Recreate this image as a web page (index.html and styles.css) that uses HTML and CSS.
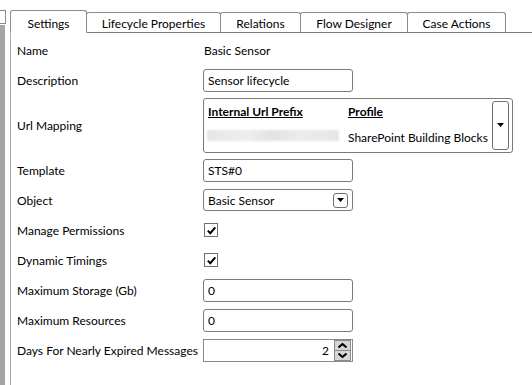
FILE: index.html
```html
<!DOCTYPE html>
<html>
<head>
<meta charset="utf-8">
<link rel="stylesheet" href="styles.css">
</head>
<body>
<div class="app">
  <div class="scroll">
    <div class="scroll-btn"></div>
    <div class="scroll-track"></div>
  </div>
  <div class="tabctl">
    <div class="tabstrip">
      <div class="tab sel w1">Settings</div>
      <div class="tab w2">Lifecycle Properties</div>
      <div class="tab w3">Relations</div>
      <div class="tab w4">Flow Designer</div>
      <div class="tab w5">Case Actions</div>
      <div class="tab-rest"></div>
    </div>
    <div class="panel">
      <div class="row"><div class="lbl">Name</div><div class="val"><span class="plain">Basic Sensor</span></div></div>
      <div class="row"><div class="lbl">Description</div><div class="val"><div class="tb">Sensor lifecycle</div></div></div>
      <div class="row tall"><div class="lbl">Url Mapping</div><div class="val">
        <div class="grid-box">
          <div class="grid-cols">
            <div class="gcol c1">
              <div class="gh">Internal Url Prefix</div>
              <div class="gcell"><div class="blur"></div></div>
            </div>
            <div class="gcol c2">
              <div class="gh">Profile</div>
              <div class="gcell">SharePoint Building Blocks</div>
            </div>
          </div>
          <div class="gbtn"><svg width="7" height="4" viewBox="0 0 7 4"><path d="M0 0H7L3.5 4Z" fill="#000"/></svg></div>
        </div>
      </div></div>
      <div class="row"><div class="lbl">Template</div><div class="val"><div class="tb">STS#0</div></div></div>
      <div class="row"><div class="lbl">Object</div><div class="val"><div class="tb cb"><span>Basic Sensor</span><div class="cbbtn"><svg width="7" height="4" viewBox="0 0 7 4"><path d="M0 0H7L3.5 4Z" fill="#000"/></svg></div></div></div></div>
      <div class="row"><div class="lbl">Manage Permissions</div><div class="val"><div class="chk"><svg width="11" height="11" viewBox="0 0 11 11"><path d="M1.8 5.6 L4.3 8.2 L9.3 2.4" fill="none" stroke="#000" stroke-width="2"/></svg></div></div></div>
      <div class="row"><div class="lbl">Dynamic Timings</div><div class="val"><div class="chk"><svg width="11" height="11" viewBox="0 0 11 11"><path d="M1.8 5.6 L4.3 8.2 L9.3 2.4" fill="none" stroke="#000" stroke-width="2"/></svg></div></div></div>
      <div class="row"><div class="lbl">Maximum Storage (Gb)</div><div class="val"><div class="tb">0</div></div></div>
      <div class="row"><div class="lbl">Maximum Resources</div><div class="val"><div class="tb">0</div></div></div>
      <div class="row"><div class="lbl">Days For Nearly Expired Messages</div><div class="val">
        <div class="num"><span class="numval">2</span>
          <div class="spin">
            <div class="sp"><svg width="9" height="5" viewBox="0 0 9 5"><path d="M0.5 4.5 L4.5 1 L8.5 4.5" fill="none" stroke="#000" stroke-width="2"/></svg></div>
            <div class="sp"><svg width="9" height="5" viewBox="0 0 9 5"><path d="M0.5 0.5 L4.5 4 L8.5 0.5" fill="none" stroke="#000" stroke-width="2"/></svg></div>
          </div>
        </div>
      </div></div>
    </div>
  </div>
</div>
</body>
</html>
```
FILE: styles.css
```css
* { box-sizing: border-box; }
html, body { margin: 0; padding: 0; background: #fff; }
body {
  font-family: "Segoe UI", Lato, "Open Sans", sans-serif;
  font-size: 12px;
  color: #000;
  width: 532px;
  height: 385px;
  overflow: hidden;
}
.app { display: flex; height: 385px; }
.scroll { width: 6px; display: flex; flex-direction: column; padding-top: 10px; }
.scroll-btn { height: 14px; border: 1px solid #8a8a8a; border-left: none; background: #fff; }
.scroll-track { flex: 1; margin-top: 1px; width: 5px; background: #a5a5a5; }
.tabctl { margin-left: 4px; flex: 1; display: flex; flex-direction: column; }
.tabstrip { display: flex; align-items: flex-end; height: 33px; padding-top: 10px; }
.tab {
  height: 21px;
  border: 1px solid #8c8c8c;
  border-bottom: 1px solid #7a7a7a;
  border-radius: 3px 3px 0 0;
  margin-right: -1px;
  display: flex; align-items: center; justify-content: center;
  padding-top: 2px;
  background: #fff;
  white-space: nowrap;
}
.tab.sel { height: 23px; border-bottom: 1px solid #fff; position: relative; z-index: 1; padding-top: 4px; padding-bottom: 0; }
.w1 { width: 77px; }
.w2 { width: 135px; }
.w3 { width: 81px; }
.w4 { width: 108px; }
.w5 { width: 99px; }
.tab-rest { flex: 1; border-bottom: 1px solid #7a7a7a; height: 1px; }
.panel { flex: 1; border-left: 1px solid #a8a8a8; padding: 2px 0 0 6px; }
.row { display: flex; align-items: center; height: 30px; }
.row.tall { height: 60px; }
.lbl { width: 186px; white-space: nowrap; }
.val { display: flex; align-items: center; }
.plain { padding-left: 1px; }
.tb {
  width: 150px; height: 23px;
  border: 1px solid #7a7a7a; border-radius: 3px;
  padding-left: 4px;
  display: flex; align-items: center;
}
.cb { justify-content: space-between; padding-right: 4px; height: 22px; }
.cbbtn {
  width: 15px; height: 15px;
  border: 1px solid #707070; border-radius: 3px;
  display: flex; align-items: center; justify-content: center;
}
.chk {
  width: 14px; height: 14px; margin-left: 1px;
  border: 1px solid #6f6f6f;
  display: flex; align-items: center; justify-content: center;
}
.grid-box {
  width: 310px; height: 55px;
  border: 1px solid #7a7a7a; border-radius: 3px;
  display: flex; padding: 2px 3px 2px 4px;
  justify-content: space-between;
}
.grid-cols { display: flex; }
.gcol { display: flex; flex-direction: column; }
.c1 { width: 140px; }
.gh { font-weight: bold; text-decoration: underline; height: 22px; display: flex; align-items: center; }
.gcell { height: 27px; display: flex; align-items: center; padding-top: 3px; }
.blur {
  width: 132px; height: 11px;
  background: linear-gradient(90deg, #e6e6e6 0%, #eeeeee 30%, #e2e2e2 50%, #ececec 70%, #e6e6e6 100%);
  filter: blur(1px);
  margin-left: -1px;
  margin-top: -5px;
}
.gbtn {
  width: 17px; height: 49px;
  border: 1px solid #707070; border-radius: 3px;
  display: flex; align-items: center; justify-content: center;
}
.num {
  width: 150px; height: 23px;
  border: 1px solid #8a8a8a;
  display: flex; align-items: center; justify-content: flex-end;
  padding-right: 1px;
}
.numval { margin-right: 5px; }
.spin { display: flex; flex-direction: column; width: 17px; height: 21px; }
.sp {
  flex: 1; background: #d6d6d6; border: 1px solid #8a8a8a;
  display: flex; align-items: center; justify-content: center;
}
.sp + .sp { border-top: none; }
```
